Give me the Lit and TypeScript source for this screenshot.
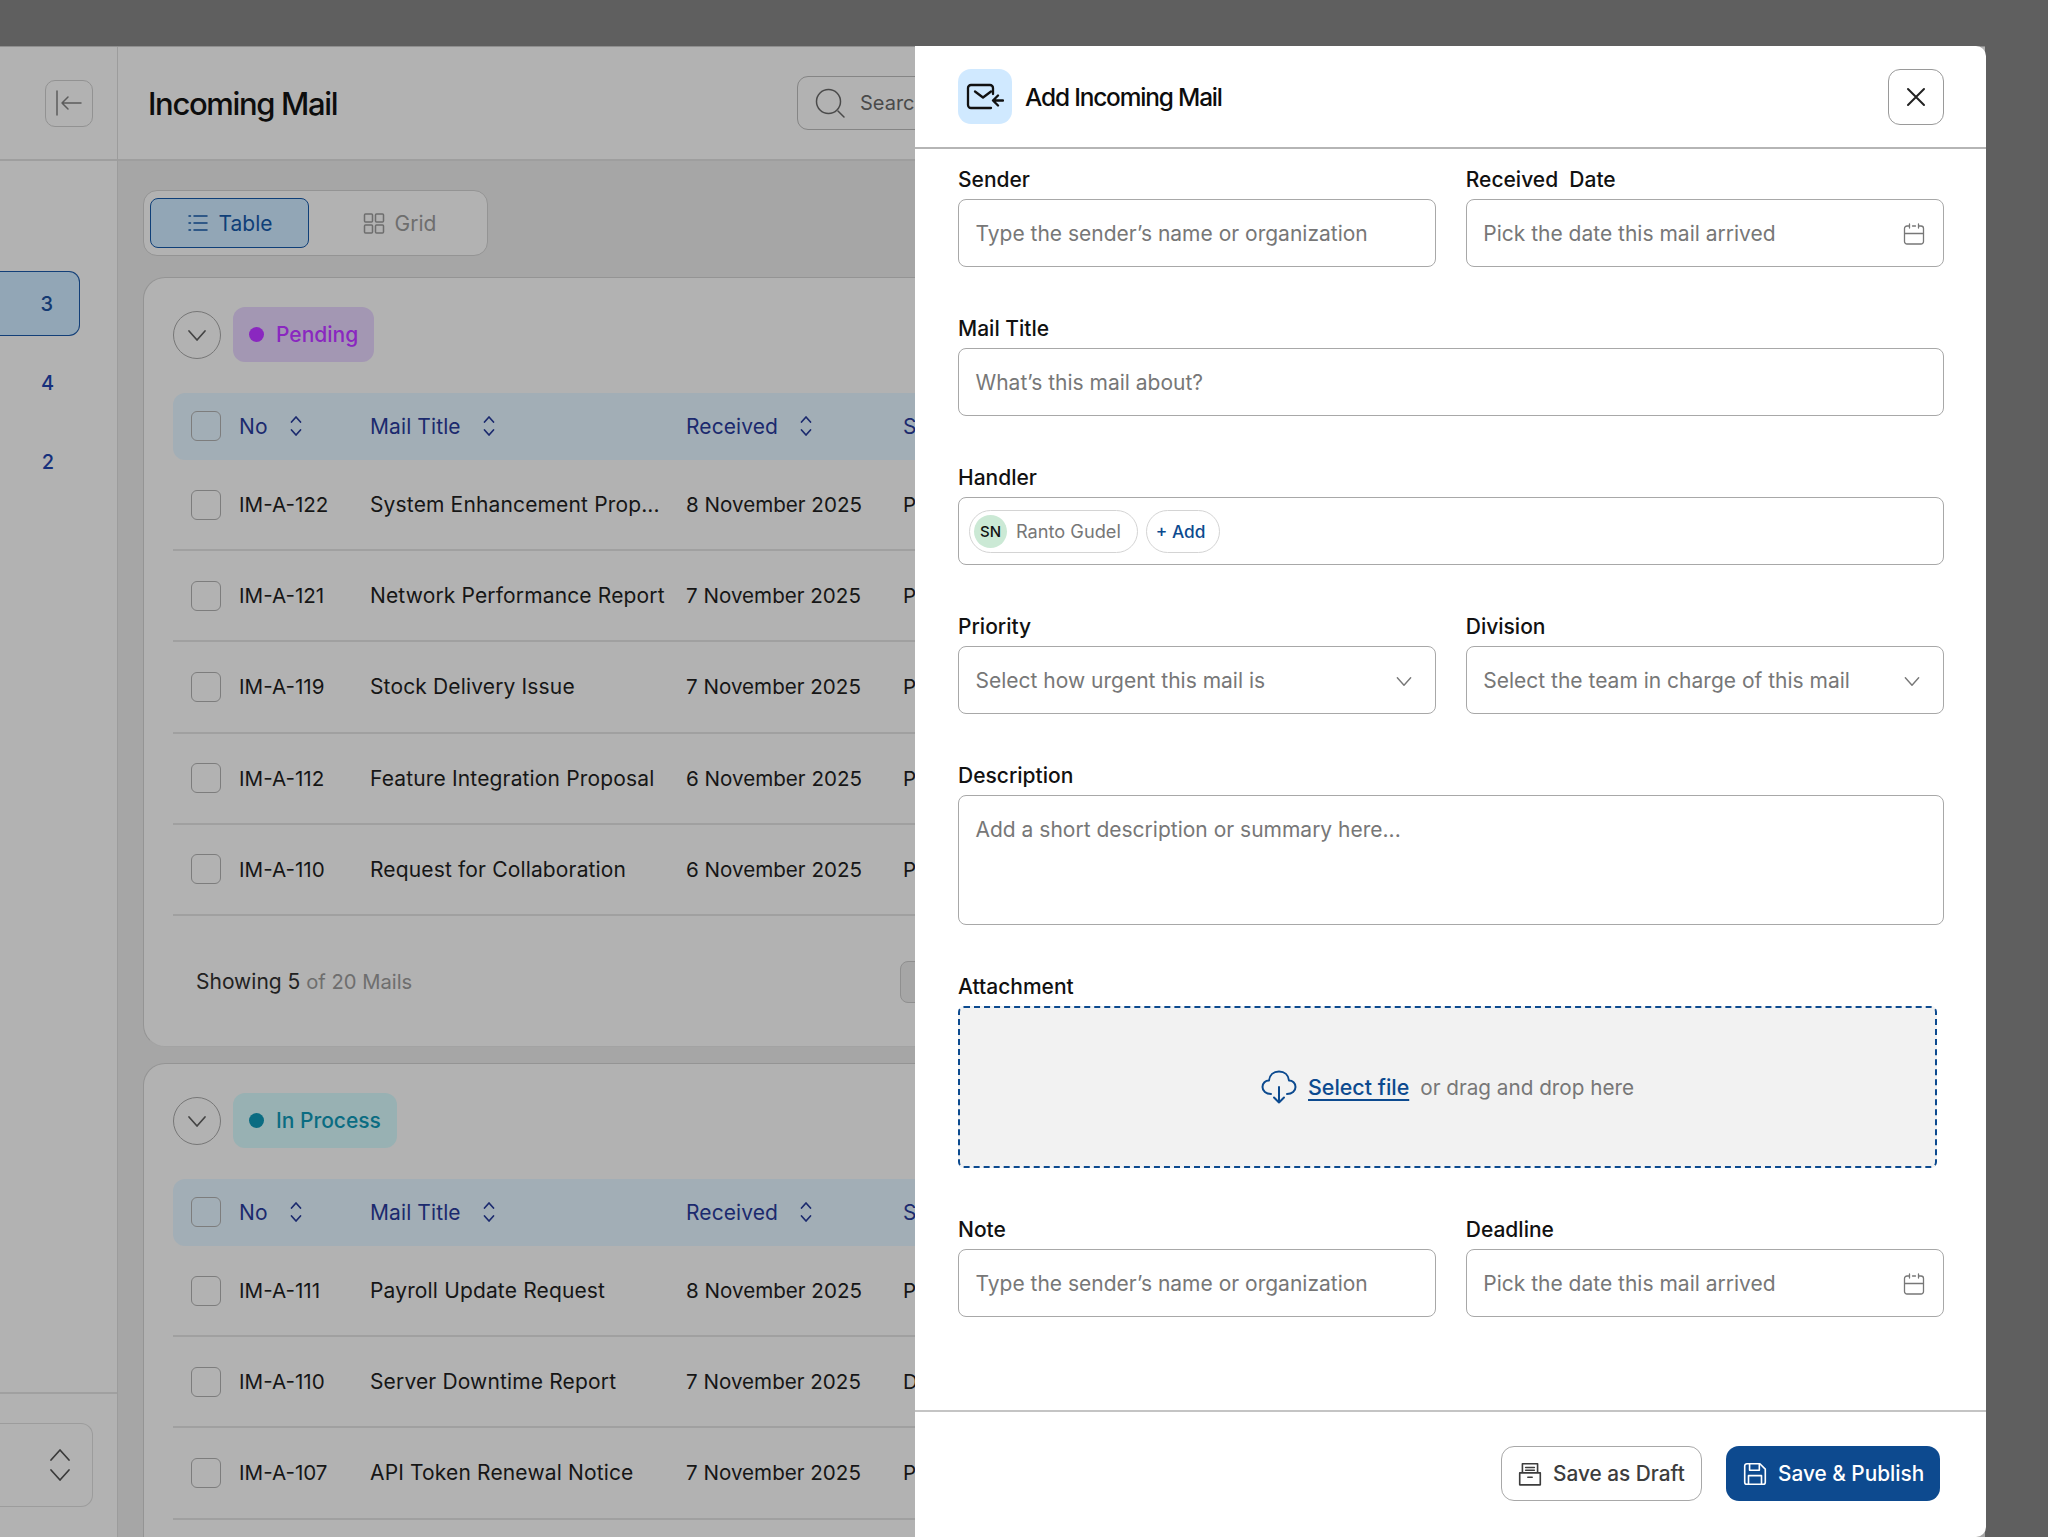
import { LitElement, html, css, svg } from "lit";
import { customElement } from "lit/decorators.js";

const icon = (w: number, h: number, vb: string, body: unknown, sw = 1.5) => html`<svg width=${w} height=${h} viewBox=${vb} fill="none" stroke="currentColor" stroke-width=${sw} stroke-linecap="round" stroke-linejoin="round">${body}</svg>`;

const sort = icon(14, 22, "0 0 14 22", svg`<path d="M2.5 7 7 2l4.5 5M2.5 15 7 20l4.5-5"/>`, 1.7);
const chevDown = (s = 24) => icon(s, s, "0 0 24 24", svg`<path d="M4 8l8 9 8-9"/>`, 1.7);
const calendar = icon(22, 22, "0 0 22 22", svg`<path d="M6 3H4a2.500 2.500 0 0 0-2.500 2.500v13A2.500 2.500 0 0 0 4 21h14a2.500 2.500 0 0 0 2.500-2.500v-13A2.500 2.500 0 0 0 18 3h-2M9.500 3h3M6.500 1v4M15.500 1v4M1.500 10.500h19"/>`, 1.3);

interface Row { no: string; title: string; date: string; next: string }
const pending: Row[] = [
  { no: "IM-A-122", title: "System Enhancement Prop...", date: "8 November 2025", next: "P" },
  { no: "IM-A-121", title: "Network Performance Report", date: "7 November 2025", next: "P" },
  { no: "IM-A-119", title: "Stock Delivery Issue", date: "7 November 2025", next: "P" },
  { no: "IM-A-112", title: "Feature Integration Proposal", date: "6 November 2025", next: "P" },
  { no: "IM-A-110", title: "Request for Collaboration", date: "6 November 2025", next: "P" },
];
const inProcess: Row[] = [
  { no: "IM-A-111", title: "Payroll Update Request", date: "8 November 2025", next: "P" },
  { no: "IM-A-110", title: "Server Downtime Report", date: "7 November 2025", next: "D" },
  { no: "IM-A-107", title: "API Token Renewal Notice", date: "7 November 2025", next: "P" },
];

@customElement("app-root")
export class AppRoot extends LitElement {
  static styles = css`
    :host { display: block; position: relative; width: 2048px; height: 1537px; overflow: hidden; background: #5f5f5f; font-family: Inter, "Liberation Sans", sans-serif; color: #161616; }
    * { box-sizing: border-box; }
    .app { position: absolute; left: 0; top: 46px; width: 1985px; height: 1491px; display: flex; overflow: hidden; background: #a6a6a6; border-top: 1px solid #8f8f8f; }

    .side { width: 118px; flex: none; display: flex; flex-direction: column; background: #b2b2b2; border-right: 1px solid #9c9c9c; }
    .side-head { height: 114px; flex: none; display: flex; align-items: center; padding-left: 45px; border-bottom: 2px solid #9e9e9e; }
    .icon-btn { width: 48px; height: 47px; border: 1.5px solid #929292; border-radius: 10px; display: flex; align-items: center; justify-content: center; color: #5c5c5c; }
    .nav { display: flex; flex-direction: column; gap: 14px; padding-top: 110px; }
    .nav-item { width: 80px; height: 65px; display: flex; align-items: center; justify-content: flex-end; padding-right: 26px; font-size: 20px; font-weight: 500; color: #16307c; }
    .nav-item.on { background: #92a6b6; border: 1.5px solid #133f78; border-left: 0; border-radius: 0 11px 11px 0; color: #143a72; }
    .side-foot { margin-top: auto; height: 145px; flex: none; border-top: 2px solid #a0a0a0; padding-top: 29px; }
    .switch { width: 93px; height: 84px; border: 1.5px solid #9c9c9c; border-left: 0; border-radius: 0 12px 12px 0; display: flex; flex-direction: column; align-items: flex-end; justify-content: center; gap: 6px; padding-right: 21px; color: #3a3a3a; }

    .main { flex: 1; min-width: 0; display: flex; flex-direction: column; }
    .head { height: 114px; flex: none; display: flex; align-items: center; gap: 460px; padding-left: 30px; background: #b2b2b2; border-bottom: 2px solid #9e9e9e; }
    h1 { margin: 0; font-size: 31px; font-weight: 500; letter-spacing: -1.35px; color: #0d0d0d; width: 189px; white-space: nowrap; }
    .search { width: 420px; height: 54px; border: 1.5px solid #858585; border-radius: 11px; display: flex; align-items: center; gap: 14px; padding-left: 16px; font-size: 20px; color: #4a4a4a; }
    .content { padding: 29px 25px 0 24.500px; display: flex; flex-direction: column; }
    .toggle { width: 345.500px; height: 66px; padding: 6.500px; display: flex; background: #b2b2b2; border: 1.5px solid #949494; border-radius: 14px; margin-bottom: 21px; }
    .tab { height: 50px; width: 159px; flex: none; display: flex; align-items: center; justify-content: center; gap: 10px; padding-top: 1px; font-size: 21px; color: #6e6e6e; }
    .tab.on { background: #92a6b6; border: 1.5px solid #0f3f78; border-radius: 8px; color: #0f3f78; }
    .tab.grid { width: 169px; padding-left: 12px; }
    .card { background: #b2b2b2; border: 1.5px solid #949494; border-bottom-color: #a3a3a3; border-radius: 22px; padding: 29px 29px 0 29.500px; margin-bottom: 16px; }
    .card.first { height: 770px; }
    .card.last { padding-bottom: 120px; }
    .group { display: flex; align-items: center; gap: 12px; margin-bottom: 30.500px; }
    .circle { width: 48px; height: 48px; border-radius: 50%; border: 1.5px solid #777; display: flex; align-items: center; justify-content: center; color: #444; }
    .badge { height: 55px; display: flex; align-items: center; gap: 12px; padding: 0 16px; border-radius: 12px; font-size: 21px; font-weight: 500; }
    .badge i { width: 15px; height: 15px; border-radius: 50%; background: currentColor; }
    .badge.pending { background: #a397b3; color: #8a27c0; }
    .badge.process { background: #98b1b3; color: #0a6c82; }
    .row { display: grid; grid-template-columns: 48px 131px 316px 217px 1fr; align-items: center; height: 91.2px; padding-left: 18px; border-bottom: 2px solid #a0a0a0; font-size: 20.600px; white-space: nowrap; }
    .row .t { font-size: 21px; letter-spacing: 0.15px; }
    .row.th { height: 67.500px; background: #a2aeb6; border: 0; border-radius: 12px; color: #1b2a6e; font-size: 21px; letter-spacing: 0.1px; }
    .th span { display: flex; align-items: center; gap: 21px; }
    .th svg { color: #1b2a6e; flex: none; }
    .cb { width: 30px; height: 30px; border: 1.5px solid #7d7d7d; border-radius: 6px; }
    .foot { display: flex; align-items: center; height: 42px; margin-top: 45px; padding-left: 23px; font-size: 20.200px; color: #6e6e6e; }
    .foot b { font-weight: 400; color: #222; white-space: pre; font-size: 21px; }
    .foot span { width: 704px; flex: none; }
    .pager { width: 60px; height: 42px; flex: none; border: 1.5px solid #8f8f8f; border-radius: 8px; background: #a6a6a6; }

    .modal { position: absolute; left: 915px; top: 46px; width: 1071px; height: 1491px; background: #fff; border-radius: 0 10px 10px 0; display: flex; flex-direction: column; }
    .m-head { height: 103px; flex: none; display: flex; align-items: center; gap: 13px; padding: 0 42.500px 0 43px; border-bottom: 2px solid #b5b5b5; }
    .m-icon { width: 54px; height: 55px; border-radius: 13px; background: #d0e9ff; display: flex; align-items: center; justify-content: center; color: #111; }
    h2 { margin: 1px 0 0; font-size: 24.400px; font-weight: 500; letter-spacing: -1.15px; color: #0d0d0d; }
    .close { margin-left: auto; width: 56px; height: 56px; border: 1.5px solid #9a9a9a; border-radius: 12px; display: flex; align-items: center; justify-content: center; color: #222; }
    .form { flex: 1; padding: 17px 42.500px 0 43px; display: grid; grid-template-columns: 1fr 1fr; column-gap: 30px; row-gap: 48px; align-content: start; }
    .field { display: flex; flex-direction: column; min-width: 0; }
    .full { grid-column: 1 / -1; }
    label { height: 26px; line-height: 28px; margin-bottom: 7px; font-size: 21px; font-weight: 500; color: #111; white-space: pre; }
    .input { height: 68px; display: flex; align-items: center; justify-content: space-between; padding: 1px 18px 0 16.500px; border: 1.5px solid #a8a8a8; border-radius: 8px; font-size: 21px; color: #777; white-space: nowrap; }
    .input svg { color: #777; flex: none; }
    .input.select svg { margin-right: 3px; }
    .textarea { height: 130px; padding: 21px 16.500px; align-items: flex-start; }
    .handlers { justify-content: flex-start; gap: 8px; padding: 0 10px; }
    .chip { height: 43px; display: flex; align-items: center; gap: 9px; padding: 0 16px 0 4px; border: 1.5px solid #d4d4d4; border-radius: 22px; font-size: 18.200px; color: #777; }
    .avatar { width: 33px; height: 33px; border-radius: 50%; background: #cbe9d5; color: #111; font-size: 15px; font-weight: 500; display: flex; align-items: center; justify-content: center; }
    .chip.add { padding: 0 14px 0 9px; font-size: 17.300px; color: #0c4a8f; font-weight: 500; }
    .drop { height: 162px; width: 979px; display: flex; align-items: center; justify-content: center; gap: 11px; background: #f2f2f2; border: 2px dashed #0c4a8f; border-radius: 6px; font-size: 20.700px; color: #777; }
    .drop svg { color: #0c4a8f; flex: none; }
    .drop a { font-size: 21.400px; color: #0c4a8f; font-weight: 500; text-decoration: underline; text-underline-offset: 4px; }
    .m-foot { height: 127px; flex: none; display: flex; justify-content: flex-end; align-items: flex-start; gap: 24px; padding: 34px 46px 0 0; border-top: 2px solid #c4c4c4; }
    .btn { height: 55px; display: flex; align-items: center; gap: 10px; padding: 0 16px; border-radius: 13px; font-size: 20.800px; font-weight: 500; white-space: nowrap; }
    .btn svg { flex: none; }
    .btn.draft { width: 201px; border: 1.5px solid #a8a8a8; color: #3d3d3d; padding-left: 15px; }
    .btn.pub { width: 214px; background: #0d4a8f; color: #fff; }
  `;

  private table(rows: Row[]) {
    return html`
      <div class="row th">
        <div class="cb"></div>
        <span>No ${sort}</span>
        <span>Mail Title ${sort}</span>
        <span>Received ${sort}</span>
        <span>S</span>
      </div>
      ${rows.map((r) => html`<div class="row"><div class="cb"></div><div>${r.no}</div><div class="t">${r.title}</div><div>${r.date}</div><div>${r.next}</div></div>`)}
    `;
  }

  private field(name: string, placeholder: string, kind: "" | "date" | "select" = "") {
    return html`<div class="field"><label>${name}</label><div class="input ${kind}"><span>${placeholder}</span>${kind === "date" ? calendar : kind === "select" ? chevDown(20) : ""}</div></div>`;
  }

  render() {
    return html`
      <div class="app">
        <aside class="side">
          <div class="side-head"><div class="icon-btn">${icon(26, 26, "0 0 26 26", svg`<path d="M1 1v24M25 13H6M12 7l-6 6 6 6"/>`)}</div></div>
          <div class="nav">
            <div class="nav-item on">3</div>
            <div class="nav-item">4</div>
            <div class="nav-item">2</div>
          </div>
          <div class="side-foot"><div class="switch">${icon(22, 14, "0 0 22 14", svg`<path d="M2 12l9-10 9 10"/>`, 1.7)}${icon(22, 14, "0 0 22 14", svg`<path d="M2 2l9 10 9-10"/>`, 1.7)}</div></div>
        </aside>
        <main class="main">
          <div class="head">
            <h1>Incoming Mail</h1>
            <div class="search">${icon(32, 32, "0 0 32 32", svg`<circle cx="14.5" cy="14.5" r="12"/><path d="M24 24l6 6"/>`)}<span>Search</span></div>
          </div>
          <div class="content">
            <div class="toggle">
              <div class="tab on">${icon(22, 22, "0 0 22 22", svg`<path d="M7 4h13M7 11h13M7 18h13M2 4h1.500M2 11h1.500M2 18h1.500"/>`)}Table</div>
              <div class="tab grid">${icon(22, 22, "0 0 22 22", svg`<rect x="1.5" y="2" width="8" height="8" rx="1"/><rect x="12.5" y="2" width="8" height="8" rx="1"/><rect x="1.5" y="13" width="8" height="8" rx="1"/><rect x="12.5" y="13" width="8" height="8" rx="1"/>`)}Grid</div>
            </div>
            <section class="card first">
              <div class="group"><div class="circle">${chevDown(24)}</div><div class="badge pending"><i></i>Pending</div></div>
              ${this.table(pending)}
              <div class="foot"><span><b>Showing 5 </b>of 20 Mails</span><div class="pager"></div></div>
            </section>
            <section class="card last">
              <div class="group"><div class="circle">${chevDown(24)}</div><div class="badge process"><i></i>In Process</div></div>
              ${this.table(inProcess)}
            </section>
          </div>
        </main>
      </div>

      <div class="modal">
        <div class="m-head">
          <div class="m-icon">${icon(38, 38, "0 0 38 38", svg`<path d="M25 30H5a3 3 0 0 1-3-3V10a3 3 0 0 1 3-3h19a3 3 0 0 1 3 3v6"/><path d="M9 13.500l8 6 8-6"/><path d="M37 22.500H27M32 17.500l-5 5 5 5"/>`, 2.3)}</div>
          <h2>Add Incoming Mail</h2>
          <div class="close">${icon(24, 24, "0 0 24 24", svg`<path d="M4 4l16 16M20 4 4 20"/>`, 2)}</div>
        </div>
        <div class="form">
          ${this.field("Sender", "Type the sender’s name or organization")}
          ${this.field("Received  Date", "Pick the date this mail arrived", "date")}
          <div class="field full"><label>Mail Title</label><div class="input"><span>What’s this mail about?</span></div></div>
          <div class="field full"><label>Handler</label><div class="input handlers">
            <div class="chip"><div class="avatar">SN</div>Ranto Gudel</div>
            <div class="chip add">+ Add</div>
          </div></div>
          ${this.field("Priority", "Select how urgent this mail is", "select")}
          ${this.field("Division", "Select the team in charge of this mail", "select")}
          <div class="field full"><label>Description</label><div class="input textarea"><span>Add a short description or summary here...</span></div></div>
          <div class="field full"><label>Attachment</label><div class="drop">
            ${icon(36, 34, "0 0 36 34", svg`<path d="M10 24C5 24 1.500 21 1.500 17C1.500 13 4.500 10.500 8 10.500C8.500 5 12.500 1.500 18 1.500C23.500 1.500 27.500 5 28 10.500C31.500 10.500 34.500 13 34.500 17C34.500 21 31 24 26 24"/><path d="M18 17V32.500M13 27.500l5 5 5-5"/>`, 2)}
            <a>Select file</a><span>or drag and drop here</span>
          </div></div>
          ${this.field("Note", "Type the sender’s name or organization")}
          ${this.field("Deadline", "Pick the date this mail arrived", "date")}
        </div>
        <div class="m-foot">
          <div class="btn draft">${icon(26, 26, "0 0 24 24", svg`<path d="M5 11V2.500h14V11M8 6h8M8 8.500h8M2.500 11h19v11h-19zM10 15h4"/>`)}Save as Draft</div>
          <div class="btn pub">${icon(26, 26, "0 0 24 24", svg`<path d="M2.500 4.500a2 2 0 0 1 2-2h12l5 5v12a2 2 0 0 1-2 2h-15a2 2 0 0 1-2-2z"/><path d="M7 2.500v6h9v-6M6 21.500v-8h12v8"/>`)}Save &amp; Publish</div>
        </div>
      </div>
    `;
  }
}
